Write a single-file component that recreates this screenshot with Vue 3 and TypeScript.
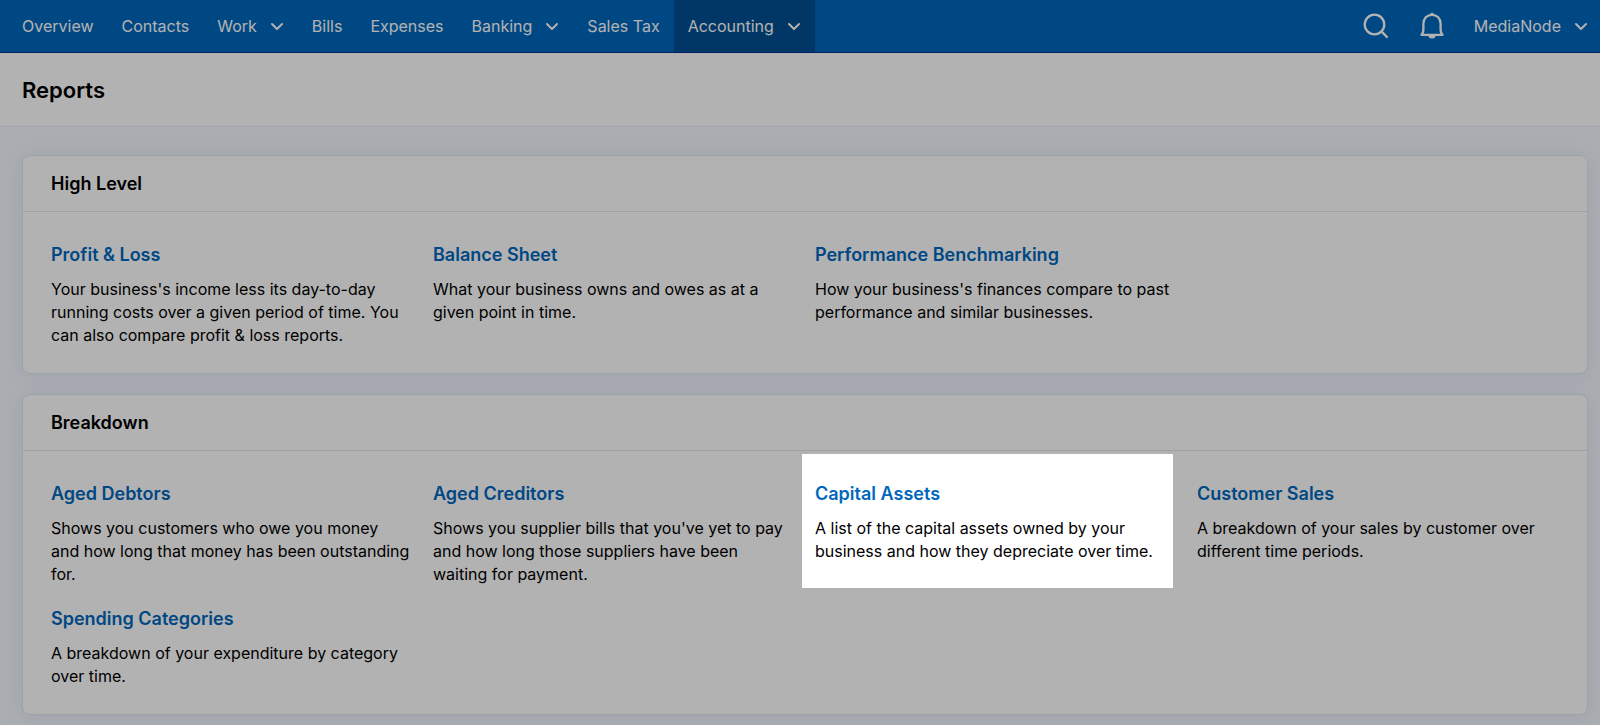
<script setup lang="ts">
interface NavItem {
  label: string
  menu?: boolean
  active?: boolean
}

interface Report {
  title: string
  description: string
  highlighted?: boolean
}

interface Section {
  id: string
  title: string
  reports: Report[]
}

const navItems: NavItem[] = [
  { label: 'Overview' },
  { label: 'Contacts' },
  { label: 'Work', menu: true },
  { label: 'Bills' },
  { label: 'Expenses' },
  { label: 'Banking', menu: true },
  { label: 'Sales Tax' },
  { label: 'Accounting', menu: true, active: true },
]

const sections: Section[] = [
  {
    id: 'high-level',
    title: 'High Level',
    reports: [
      {
        title: 'Profit & Loss',
        description:
          "Your business's income less its day-to-day running costs over a given period of time. You can also compare profit & loss reports.",
      },
      {
        title: 'Balance Sheet',
        description: 'What your business owns and owes as at a given point in time.',
      },
      {
        title: 'Performance Benchmarking',
        description:
          "How your business's finances compare to past performance and similar businesses.",
      },
    ],
  },
  {
    id: 'breakdown',
    title: 'Breakdown',
    reports: [
      {
        title: 'Aged Debtors',
        description:
          'Shows you customers who owe you money and\u00a0how long that money has been outstanding for.',
      },
      {
        title: 'Aged Creditors',
        description:
          "Shows you supplier bills that you've yet to pay and how long those suppliers have been waiting for payment.",
      },
      {
        title: 'Capital Assets',
        description:
          'A list of the capital assets owned by your business and how they depreciate over time.',
        highlighted: true,
      },
      {
        title: 'Customer Sales',
        description: 'A breakdown of your sales by customer over different time periods.',
      },
      {
        title: 'Spending Categories',
        description: 'A breakdown of your expenditure by category over time.',
      },
    ],
  },
]
</script>

<template>
  <div class="page">
    <header class="topbar">
      <nav class="nav" aria-label="Main">
        <template v-for="item in navItems" :key="item.label">
          <button
            v-if="item.menu"
            type="button"
            class="nav-item"
            :class="{ active: item.active }"
            aria-haspopup="true"
          >
            {{ item.label }}
            <svg class="chevron" viewBox="0 0 14 14" aria-hidden="true">
              <path d="M2 5l5 5 5-5" />
            </svg>
          </button>
          <a v-else href="#" class="nav-item">{{ item.label }}</a>
        </template>
      </nav>
      <div class="tools">
        <button type="button" class="icon-button" aria-label="Search">
          <svg class="icon" viewBox="0 0 28 28" aria-hidden="true">
            <circle cx="12.5" cy="12.5" r="9.8" />
            <path d="M19.4 19.4l6.2 6.2" />
          </svg>
        </button>
        <button type="button" class="icon-button" aria-label="Notifications">
          <svg class="icon" viewBox="0 0 28 28" aria-hidden="true">
            <path
              d="M3.4 22.8 C5.2 21.4 5.4 19.5 5.4 17 V11.6 C5.4 6.6 9 2.8 14 2.8 C19 2.8 22.6 6.6 22.6 11.6 V17 C22.6 19.5 22.8 21.4 24.6 22.8 Z"
            />
            <path class="solid" d="M12 2.6 a2 1.8 0 0 1 4 0 Z M10.4 23.6 h7.2 a3.6 3 0 0 1 -7.2 0 Z" />
          </svg>
        </button>
        <button type="button" class="nav-item account" aria-haspopup="true">
          MediaNode
          <svg class="chevron" viewBox="0 0 14 14" aria-hidden="true">
            <path d="M2 5l5 5 5-5" />
          </svg>
        </button>
      </div>
    </header>

    <div class="page-title">
      <h1>Reports</h1>
    </div>

    <main class="content">
      <section
        v-for="section in sections"
        :key="section.id"
        class="card"
        :aria-labelledby="section.id"
      >
        <h2 :id="section.id" class="card-title">{{ section.title }}</h2>
        <div class="reports">
          <article
            v-for="report in section.reports"
            :key="report.title"
            class="report"
            :class="{ spotlight: report.highlighted }"
          >
            <h3><a href="#">{{ report.title }}</a></h3>
            <p>{{ report.description }}</p>
          </article>
        </div>
      </section>
    </main>
  </div>
</template>

<style>
body {
  margin: 0;
  background: #f4f8ff;
}
</style>

<style scoped>
.page {
  box-sizing: border-box;
  min-height: 100vh;
  overflow: hidden;
  background: #f4f8ff;
  color: #000;
  font-family: Inter, 'Liberation Sans', sans-serif;
  font-size: 16px;
  line-height: 23px;
}

.topbar {
  display: flex;
  justify-content: space-between;
  height: 52px;
  padding-left: 8px;
  border-bottom: 1px solid #002c92;
  background: #0067bd;
}

.nav,
.tools {
  display: flex;
  align-items: stretch;
}

.nav-item {
  display: flex;
  align-items: center;
  gap: 13px;
  padding: 0 14px;
  border: 0;
  background: none;
  color: #fff;
  font: inherit;
  text-decoration: none;
  white-space: nowrap;
  cursor: pointer;
}

.nav-item.active {
  background: #004f92;
}

.account {
  padding-right: 12px;
}

.chevron {
  width: 14px;
  height: 14px;
  fill: none;
  stroke: #fff;
  stroke-width: 2;
  stroke-linecap: round;
  stroke-linejoin: round;
}

.icon-button {
  display: flex;
  align-items: center;
  padding: 0 14px;
  border: 0;
  background: none;
  cursor: pointer;
}

.icon {
  width: 28px;
  height: 28px;
  fill: none;
  stroke: #fff;
  stroke-width: 2.3;
  stroke-linejoin: round;
}

.icon .solid {
  fill: #fff;
  stroke: none;
}

.page-title {
  padding: 23px 22px 22px;
  border-bottom: 1px solid #e6ebf3;
  background: #fff;
}

h1 {
  margin: 0;
  font-size: 22px;
  font-weight: 600;
  line-height: 28px;
}

.content {
  display: flex;
  flex-direction: column;
  gap: 20px;
  padding: 28px 12px 28px 22px;
}

.card {
  border: 1px solid #e3e7f0;
  border-radius: 8px;
  background: #fff;
  box-shadow: 0 2px 20px rgba(40, 70, 150, 0.08);
}

.card-title {
  margin: 0;
  padding: 14px 28px;
  border-bottom: 1px solid #e2e4e8;
  font-size: 18px;
  font-weight: 600;
  line-height: 27px;
}

.reports {
  display: grid;
  grid-template-columns: repeat(4, minmax(0, 1fr));
  gap: 20px;
  padding: 30px 28px 26px;
}

h3 {
  margin: 0 0 10px;
  font-size: 18px;
  font-weight: 600;
  line-height: 26px;
}

h3 a {
  color: #0067bd;
  text-decoration: none;
}

p {
  margin: 0;
}

/* Dims the whole page except for the area around one report. */
.spotlight {
  position: relative;
}

.spotlight::after {
  content: '';
  position: absolute;
  z-index: 10;
  inset: -27px 4px -2px -13px;
  box-shadow: 0 0 0 9999px rgba(0, 0, 0, 0.3);
  pointer-events: none;
}
</style>
